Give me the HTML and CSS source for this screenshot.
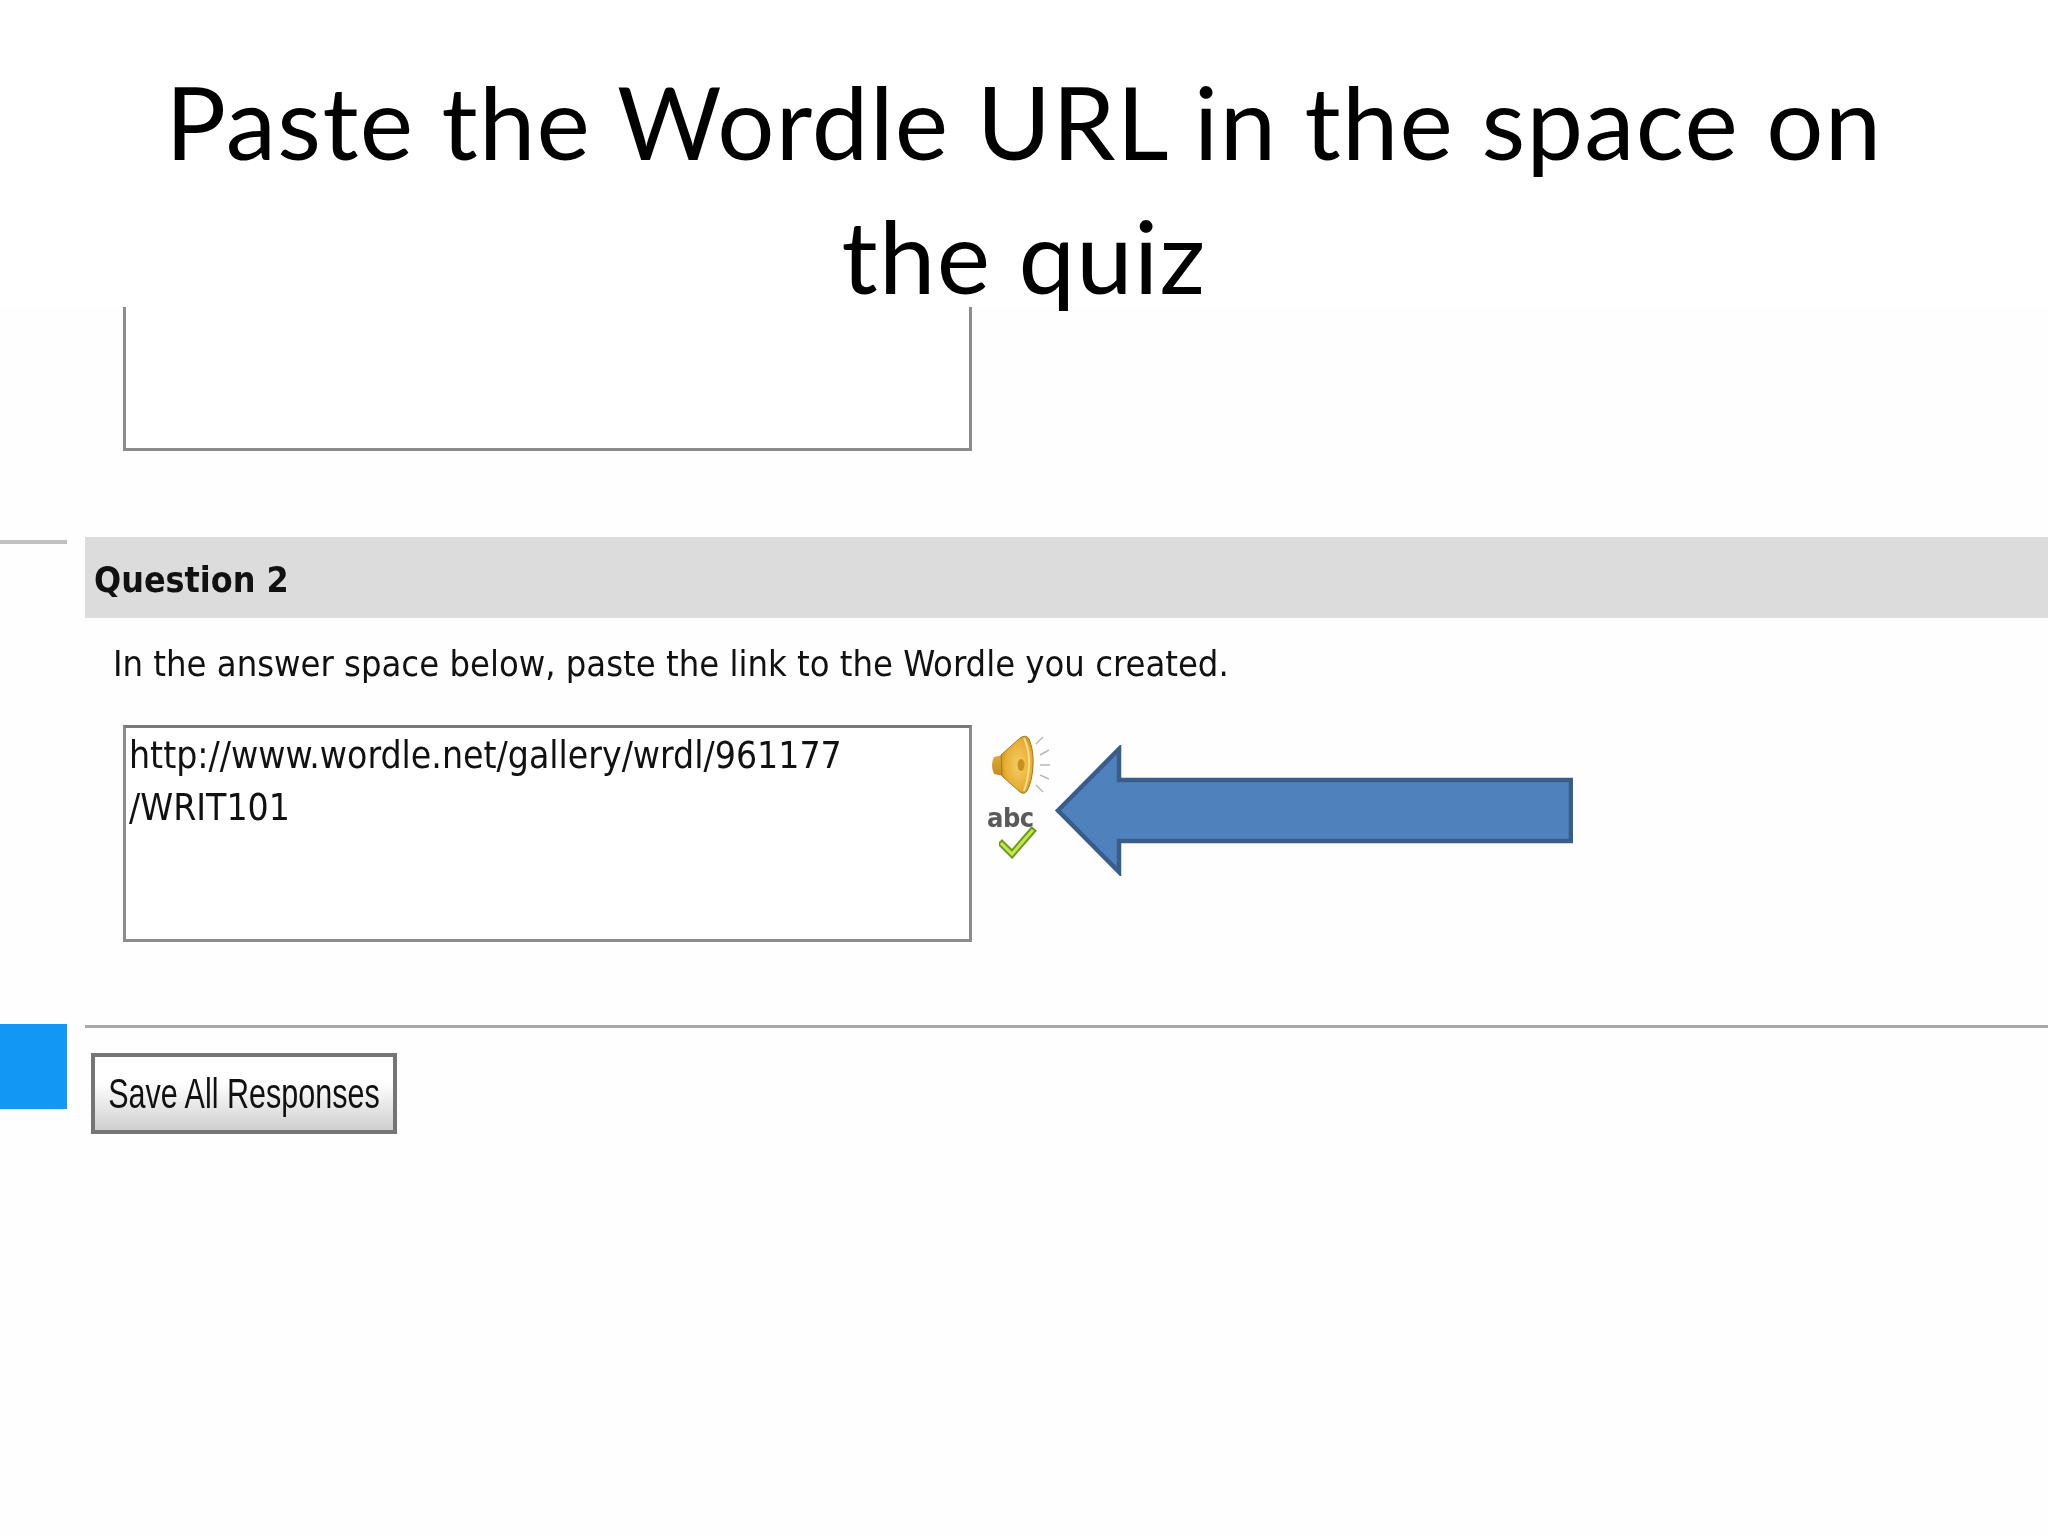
FILE: index.html
```html
<!DOCTYPE html>
<html lang="en">
<head>
<meta charset="utf-8">
<title>Paste the Wordle URL</title>
<link rel="stylesheet" href="styles.css">
</head>
<body>
<header class="title">
  <h1>Paste the Wordle URL in the space on<br>the quiz</h1>
</header>
<main class="shot">
  <div class="box box-top"></div>
  <section class="row row-question">
    <div class="rail"><div class="rail-rule"></div></div>
    <div class="content">
      <h2 class="bar">Question 2</h2>
      <p class="prompt">In the answer space below, paste the link to the Wordle you created.</p>
      <div class="answer">
        <div class="box box-answer"><div class="answer-text">http://www.wordle.net/gallery/wrdl/961177<br>/WRIT101</div></div>
        <div class="tools">
          <svg class="speaker" width="64" height="60" viewBox="0 0 64 60">
            <defs>
              <radialGradient id="horn" cx="0.55" cy="0.5" r="0.7">
                <stop offset="0" stop-color="#f6cf63"/>
                <stop offset="0.6" stop-color="#e6ae36"/>
                <stop offset="1" stop-color="#b27c14"/>
              </radialGradient>
              <linearGradient id="back" x1="0" y1="0" x2="0" y2="1">
                <stop offset="0" stop-color="#e2aa3a"/>
                <stop offset="1" stop-color="#c48b1d"/>
              </linearGradient>
            </defs>
            <path fill="url(#back)" d="M4 22q-4 8 0 17l9 2V20z"/>
            <path class="horn-body" fill="url(#horn)" d="M11 20L30 3q6-4 9 1q5 12 4 27q-1 16-6 25q-3 4-7 1L12 41z"/>
            <path class="horn-rim" d="M34 3q6 13 5 28q-1 14-5 25"/>
            <ellipse class="horn-cap" cx="31" cy="30" rx="3.500" ry="6"/>
            <path class="rays" d="M46 9l7-7M50 20l9-5M50 30h10M50 40l9 4M46 50l7 7"/>
          </svg>
          <div class="spell">
            <span class="abc">abc</span>
            <svg class="check" width="38" height="32" viewBox="0 0 38 32">
              <path class="check-mark" d="M3 17l10 10L33 4"/>
              <path class="check-fill" d="M3 17l10 10L33 4"/>
            </svg>
          </div>
        </div>
        <svg class="arrow" width="519" height="131" viewBox="0 0 519 131">
          <path class="arrow-shape" d="M4 65.500L65 4V35H517V96H65V127Z"/>
        </svg>
      </div>
    </div>
  </section>
  <section class="row row-footer">
    <div class="rail"><div class="rail-block"></div></div>
    <div class="content">
      <div class="footer-rule"></div>
      <button class="save" type="button"><span class="save-label">Save All Responses</span></button>
    </div>
  </section>
</main>
</body>
</html>
```
FILE: styles.css
```css
* { box-sizing: border-box; }
html, body { margin: 0; padding: 0; }
body {
  width: 2048px;
  height: 1536px;
  overflow: hidden;
  background: #fefefe;
  color: #111;
  font-family: "DejaVu Sans", sans-serif;
}
.title {
  height: 307px;
  padding-top: 54px;
  background: #fff;
  text-align: center;
}
.title h1 {
  margin: 0;
  font-family: Lato, "Open Sans", sans-serif;
  font-weight: 400;
  font-size: 101px;
  letter-spacing: 1.300px;
  line-height: 134px;
  color: #000;
}
.box {
  border: 3px solid #8c8c8c;
  background: #fff;
}
.box-top {
  width: 849px;
  height: 144px;
  margin-left: 123px;
  border-top: 0;
}
.row { display: flex; }
.row-question { margin-top: 86px; height: 488px; }
.rail { flex: 0 0 67px; margin-right: 18px; }
.content { flex: 1; min-width: 0; }
.rail-rule { height: 4px; margin-top: 3px; background: #c0c0c0; }
.bar {
  height: 81px;
  margin: 0;
  padding-left: 9px;
  background: #dcdcdc;
  font-size: 35.500px;
  font-weight: 700;
  font-stretch: condensed;
  line-height: 85px;
  filter: blur(0.6px);
}
.prompt {
  height: 44px;
  margin: 24px 0 0 28px;
  font-size: 36px;
  font-stretch: condensed;
  line-height: 44px;
  filter: blur(0.6px);
}
.answer {
  display: flex;
  align-items: flex-start;
  margin: 39px 0 0 38px;
}
.box-answer {
  flex: 0 0 849px;
  height: 217px;
  border-top-color: #777;
}
.answer-text {
  padding: 2px 0 0 3px;
  font-size: 37px;
  font-stretch: condensed;
  line-height: 52px;
  filter: blur(0.6px);
}
.tools {
  display: flex;
  flex-direction: column;
  margin: 10px 0 0 15px;
  width: 68px;
}
.speaker { margin-left: 3px; }
.horn-body { stroke: #a87a18; stroke-width: 1; }
.horn-rim { fill: none; stroke: #f8dc86; stroke-width: 2; }
.horn-cap { fill: #c68f20; }
.rays { fill: none; stroke: #b9b9b9; stroke-width: 1.500; }
.spell { position: relative; height: 58px; margin-top: 10px; }
.abc {
  display: block;
  font-size: 27px;
  font-weight: 700;
  font-stretch: condensed;
  line-height: 26px;
  color: #5a5a5a;
  letter-spacing: -0.500px;
  filter: blur(0.5px);
}
.check { position: absolute; left: 12px; top: 22px; }
.check-mark, .check-fill { fill: none; stroke-linecap: square; }
.check-mark { stroke: #6f9a1e; stroke-width: 7; }
.check-fill { stroke: #c4e84e; stroke-width: 3; }
.arrow { margin: 20px 0 0 -1px; flex: none; }
.arrow-shape { fill: #4f81bd; stroke: #385d8a; stroke-width: 4.500; }
.rail-block { height: 85px; margin-top: -1px; background: #1297f5; }
.footer-rule { height: 3px; background: #a9a9a9; }
.save {
  display: block;
  width: 306px;
  height: 81px;
  margin: 25px 0 0 6px;
  padding: 0;
  border: 4px solid #757575;
  background: linear-gradient(#fff 35%, #cfcfcf);
  color: #111;
  font-family: "Liberation Sans", sans-serif;
  font-size: 43px;
  filter: blur(0.6px);
}
.save-label {
  display: inline-block;
  width: calc(100% + 120px);
  margin: 0 -60px;
  white-space: nowrap;
  text-align: center;
  transform: scaleX(0.71);
  transform-origin: center;
}
```
